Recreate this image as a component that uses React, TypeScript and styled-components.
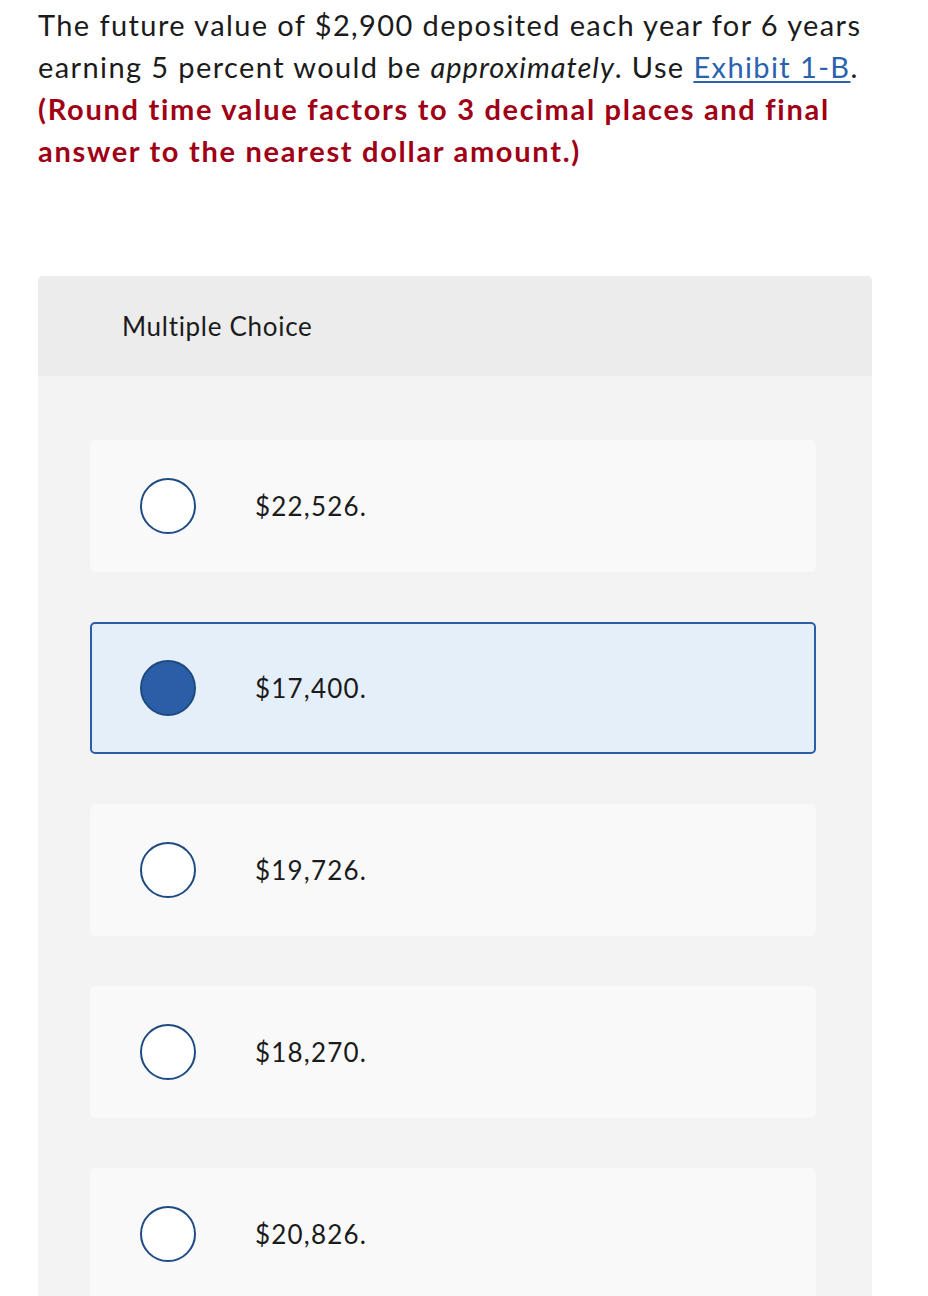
import styled, { createGlobalStyle } from 'styled-components'

const GlobalStyle = createGlobalStyle`
  body {
    margin: 0;
    background: #ffffff;
    font-family: Lato, "Open Sans", "Liberation Sans", sans-serif;
    color: #1b1b1b;
  }
`

interface Choice {
  id: string
  label: string
}

const choices: Choice[] = [
  { id: 'a', label: '$22,526.' },
  { id: 'b', label: '$17,400.' },
  { id: 'c', label: '$19,726.' },
  { id: 'd', label: '$18,270.' },
  { id: 'e', label: '$20,826.' },
]

const selectedId = 'b'

const App = () => {
  return (
    <>
      <GlobalStyle />
      <Page>
        <Prompt>
          The future value of $2,900 deposited each year for 6 years earning 5 percent would be{' '}
          <em>approximately</em>. Use <ExhibitLink href="#">Exhibit 1-B</ExhibitLink>.
          <br />
          <Instruction>
            (Round time value factors to 3 decimal places and final answer to the nearest dollar
            amount.)
          </Instruction>
        </Prompt>

        <ChoicePanel>
          <PanelHeader>Multiple Choice</PanelHeader>
          <ChoiceList>
            {choices.map((choice) => {
              const selected = choice.id === selectedId
              return (
                <ChoiceRow key={choice.id} $selected={selected}>
                  <Radio $selected={selected} />
                  <ChoiceLabel>{choice.label}</ChoiceLabel>
                </ChoiceRow>
              )
            })}
          </ChoiceList>
        </ChoicePanel>
      </Page>
    </>
  )
}

const Page = styled.div`
  padding: 4px 56px 0 38px;
  height: 1296px;
  box-sizing: border-box;
  overflow: hidden;
`

const Prompt = styled.p`
  margin: 0;
  font-size: 29px;
  line-height: 42px;
  letter-spacing: 1.4px;
  color: #1b1b1b;

  em {
    font-style: italic;
    letter-spacing: 1px;
  }
`

const ExhibitLink = styled.a`
  color: #2a62ae;
  text-decoration: underline;
  text-underline-offset: 3px;
  text-decoration-thickness: 2px;
`

const Instruction = styled.strong`
  font-weight: 700;
  letter-spacing: 1.7px;
  color: #a00016;
`

const ChoicePanel = styled.div`
  margin-top: 104px;
  border-radius: 5px 5px 0 0;
  background: #f3f3f3;
  overflow: hidden;
`

const PanelHeader = styled.div`
  display: flex;
  align-items: center;
  height: 100px;
  padding-left: 84px;
  background: #ececec;
  font-size: 26px;
  letter-spacing: 0.7px;
  color: #1b1b1b;
`

const ChoiceList = styled.div`
  display: flex;
  flex-direction: column;
  gap: 50px;
  padding: 64px 56px 64px 52px;
`

const ChoiceRow = styled.div<{ $selected: boolean }>`
  display: flex;
  align-items: center;
  height: 132px;
  box-sizing: border-box;
  padding-left: 50px;
  border-radius: 5px;
  border: 2px solid ${(p) => (p.$selected ? '#2c5ea8' : 'transparent')};
  background: ${(p) => (p.$selected ? '#e5eff9' : '#f9f9f9')};
`

const Radio = styled.span<{ $selected: boolean }>`
  flex: none;
  width: 56px;
  height: 56px;
  box-sizing: border-box;
  margin-left: -2px;
  border-radius: 50%;
  border: 2px solid ${(p) => (p.$selected ? '#1d4a82' : '#1f4b84')};
  background: ${(p) => (p.$selected ? '#2c5ea8' : '#ffffff')};
`

const ChoiceLabel = styled.span`
  margin-left: 59px;
  font-size: 26px;
  letter-spacing: 1.2px;
  color: #1b1b1b;
`

export default App
